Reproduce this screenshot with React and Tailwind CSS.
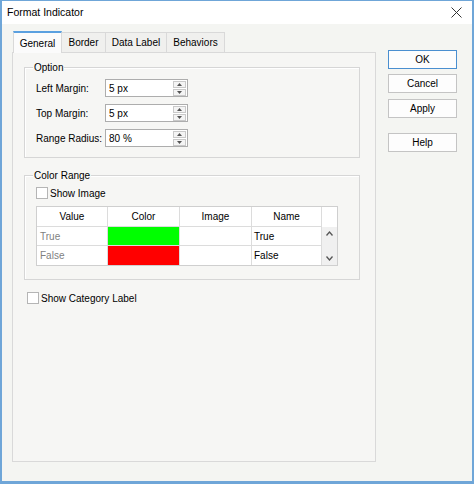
import React from "react";

const Spinner = () => (
  <div className="flex flex-col gap-[1px] w-[13px] mr-[1px]">
    <div className="h-[7px] border border-[#c9c9c9] bg-[#f4f4f4] flex items-center justify-center">
      <svg width="5" height="3" viewBox="0 0 5 3"><path d="M0 3 L2.5 0 L5 3 Z" fill="#555" /></svg>
    </div>
    <div className="h-[7px] border border-[#c9c9c9] bg-[#f4f4f4] flex items-center justify-center">
      <svg width="5" height="3" viewBox="0 0 5 3"><path d="M0 0 L2.5 3 L5 0 Z" fill="#555" /></svg>
    </div>
  </div>
);

const SpinField = ({ label, value }) => (
  <div className="flex items-center h-[18px]">
    <span className="w-[69px]">{label}</span>
    <div className="w-[83px] h-[18px] border border-[#adadad] bg-white flex items-center">
      <span className="flex-1 pl-[3px]">{value}</span>
      <Spinner />
    </div>
  </div>
);

const Group = ({ title, className, children }) => (
  <div className={`border border-[#d6d6d6] shadow-[inset_1px_1px_0_#ffffff] ${className}`}>
    <span className="block w-fit -mt-[8px] ml-[8px] px-[1px] leading-[15px] bg-[#f6f6f4]">{title}</span>
    {children}
  </div>
);

const Checkbox = () => (
  <div className="w-[12px] h-[12px] border border-[#b5b5b5] bg-white shrink-0" />
);

const Button = ({ children, primary, className = "" }) => (
  <div
    className={`w-[69px] h-[19px] flex items-center justify-center bg-[#fdfdfd] border ${
      primary ? "border-[#4a8fd0]" : "border-[#c4c4c4]"
    } ${className}`}
  >
    {children}
  </div>
);

const rows = [
  { value: "True", color: "bg-[#00ff00]", name: "True" },
  { value: "False", color: "bg-[#ff0000]", name: "False" },
];

export default function App() {
  return (
    <div className="w-[474px] h-[484px] flex flex-col border-x-2 border-t border-b-[3px] border-[#6fa6d8] bg-[#f4f5f2] text-[10px] text-black font-['Liberation_Sans',Arial,sans-serif]">
      {/* Title bar */}
      <div className="h-[23px] bg-white flex items-center justify-between pl-[5px] pr-[10px] shrink-0">
        <span className="text-[10.5px]">Format Indicator</span>
        <svg width="11" height="11" viewBox="0 0 11 11">
          <path d="M0.5 0.5 L10.5 10.5 M10.5 0.5 L0.5 10.5" stroke="#333" strokeWidth="1" />
        </svg>
      </div>

      <div className="flex pl-[10px] pt-[6px]">
        {/* Left: tabs */}
        <div className="flex flex-col w-[364px]">
          <div className="flex items-end h-[22px] pl-[1px]">
            <div className="h-[22px] w-[49px] border-x border-t-2 border-t-[#5aa0e0] border-x-[#d9d9d9] bg-[#fbfbfb] flex items-center justify-center -mb-[1px] relative z-10">
              General
            </div>
            <div className="h-[20px] w-[44px] border-t border-r border-[#d9d9d9] bg-[#f0f0ee] flex items-center justify-center">Border</div>
            <div className="h-[20px] w-[61px] border-t border-r border-[#d9d9d9] bg-[#f0f0ee] flex items-center justify-center">Data Label</div>
            <div className="h-[20px] w-[58px] border-t border-r border-[#d9d9d9] bg-[#f0f0ee] flex items-center justify-center">Behaviors</div>
          </div>
          <div className="h-[410px] border border-[#d9d9d9] bg-[#f6f6f4] pl-[11px] pt-[14px]">
            <Group title="Option" className="w-[336px] h-[91px]">
              <div className="flex flex-col gap-[7px] pl-[11px] mt-[4px]">
                <SpinField label="Left Margin:" value="5 px" />
                <SpinField label="Top Margin:" value="5 px" />
                <SpinField label="Range Radius:" value="80 %" />
              </div>
            </Group>

            <Group title="Color Range" className="w-[336px] h-[105px] mt-[17px]">
              <div className="pl-[11px]">
                <div className="flex items-center gap-[2px] mt-[4px] h-[12px]">
                  <Checkbox />
                  <span>Show Image</span>
                </div>
                <div className="mt-[7px] w-[302px] border border-[#cfcfcf] bg-white flex">
                  <div className="flex flex-col w-[285px]">
                    <div className="flex h-[20px] border-b border-[#dcdcdc]">
                      <div className="w-[71px] border-r border-[#dcdcdc] flex items-center justify-center">Value</div>
                      <div className="w-[72px] border-r border-[#dcdcdc] flex items-center justify-center">Color</div>
                      <div className="w-[72px] border-r border-[#dcdcdc] flex items-center justify-center">Image</div>
                      <div className="w-[70px] border-r border-[#dcdcdc] flex items-center justify-center">Name</div>
                    </div>
                    {rows.map((r, i) => (
                      <div key={i} className={`flex h-[19px] ${i === 0 ? "border-b border-[#dcdcdc]" : ""}`}>
                        <div className="w-[71px] border-r border-[#dcdcdc] flex items-center pl-[3px] text-[#7f7f7f]">{r.value}</div>
                        <div className={`w-[72px] border-r border-[#dcdcdc] ${r.color}`} />
                        <div className="w-[72px] border-r border-[#dcdcdc]" />
                        <div className="w-[70px] border-r border-[#dcdcdc] flex items-center pl-[2px]">{r.name}</div>
                      </div>
                    ))}
                  </div>
                  <div className="flex-1 flex flex-col">
                    <div className="h-[20px] bg-white" />
                    <div className="flex-1 bg-[#f0f0f0] flex flex-col items-center justify-between py-[4px]">
                      <svg width="7" height="5" viewBox="0 0 7 5"><path d="M0.5 4.5 L3.5 1 L6.5 4.5" fill="none" stroke="#555" strokeWidth="1.3" /></svg>
                      <svg width="7" height="5" viewBox="0 0 7 5"><path d="M0.5 0.5 L3.5 4 L6.5 0.5" fill="none" stroke="#555" strokeWidth="1.3" /></svg>
                    </div>
                  </div>
                </div>
              </div>
            </Group>

            <div className="flex items-center gap-[2px] mt-[12px] ml-[3px] h-[12px]">
              <Checkbox />
              <span>Show Category Label</span>
            </div>
          </div>
        </div>

        {/* Right: buttons */}
        <div className="flex flex-col ml-[12px] mt-[20px]">
          <Button primary>OK</Button>
          <Button className="mt-[5px]">Cancel</Button>
          <Button className="mt-[6px]">Apply</Button>
          <Button className="mt-[15px]">Help</Button>
        </div>
      </div>
    </div>
  );
}
